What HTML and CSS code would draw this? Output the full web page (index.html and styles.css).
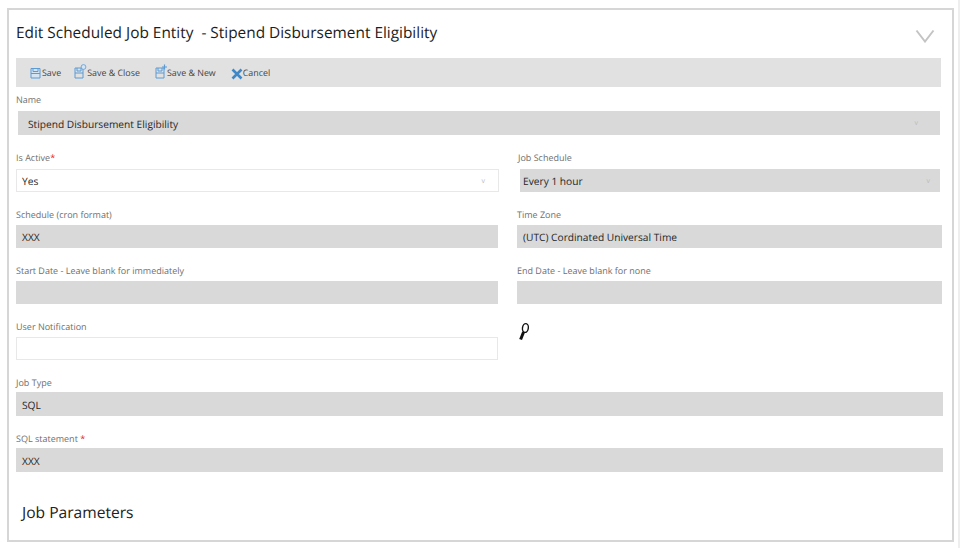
FILE: index.html
```html
<!DOCTYPE html>
<html lang="en">
<head>
<meta charset="utf-8">
<title>Edit Scheduled Job Entity</title>
<link rel="stylesheet" href="styles.css">
</head>
<body>
<main class="frame">
  <header class="head">
    <h1 class="title">Edit Scheduled Job Entity&nbsp; - Stipend Disbursement Eligibility</h1>
    <svg class="collapse" width="20" height="14" viewBox="0 0 20 14"><path d="M1.5 1.5 L10 12.5 L18.5 1.5" fill="none" stroke="#c4c4c4" stroke-width="2"/></svg>
  </header>
  <nav class="toolbar">
    <span class="tool tool-save">
      <svg width="11" height="12" viewBox="0 0 11 12"><path d="M1 1.5h9v9.5H1z" fill="#d4e4f3" stroke="#5b9bd5" stroke-width="1"/><path d="M3 1.5v3h5v-3 M1 6.5h9" fill="none" stroke="#5b9bd5" stroke-width="1"/></svg>Save</span>
    <span class="tool tool-close">
      <svg width="13" height="15" viewBox="0 0 13 15"><path d="M1 4h8v10H1z M3 4v3h4V4 M1 9h8" fill="none" stroke="#5b9bd5" stroke-width="1"/><circle cx="9.5" cy="3" r="2.4" fill="#d4e4f3" stroke="#5b9bd5" stroke-width=".8"/></svg>Save &amp; Close</span>
    <span class="tool tool-new">
      <svg width="13" height="15" viewBox="0 0 13 15"><path d="M1 4h8v10H1z M3 4v3h4V4 M1 9h8" fill="none" stroke="#5b9bd5" stroke-width="1"/><path d="M9.5 .5v5 M7 3h5" stroke="#5b9bd5" stroke-width="1.2"/></svg>Save &amp; New</span>
    <span class="tool tool-cancel">
      <svg width="12" height="12" viewBox="0 0 12 12"><path d="M1.5 1.5 L10.5 10.5 M10.5 1.5 L1.5 10.5" stroke="#3f87c7" stroke-width="2.6"/></svg>Cancel</span>
  </nav>

  <div class="field name-field">
    <label class="label">Name</label>
    <div class="box grey inset">Stipend Disbursement Eligibility<span class="caret">v</span></div>
  </div>

  <div class="row row-first">
    <div class="field narrow">
      <label class="label">Is Active<span class="req">*</span></label>
      <div class="box white select">Yes<span class="caret">v</span></div>
    </div>
    <div class="field schedule">
      <label class="label">Job Schedule</label>
      <div class="box grey select">Every 1 hour<span class="caret">v</span></div>
    </div>
  </div>

  <div class="row">
    <div class="field">
      <label class="label">Schedule (cron format)</label>
      <div class="box grey">XXX</div>
    </div>
    <div class="field">
      <label class="label">Time Zone</label>
      <div class="box grey">(UTC) Cordinated Universal Time</div>
    </div>
  </div>

  <div class="row">
    <div class="field">
      <label class="label">Start Date - Leave blank for immediately</label>
      <div class="box grey"></div>
    </div>
    <div class="field">
      <label class="label">End Date - Leave blank for none</label>
      <div class="box grey"></div>
    </div>
  </div>

  <div class="row">
    <div class="field">
      <label class="label">User Notification</label>
      <div class="box white"></div>
    </div>
    <div class="field cursor-cell">
      <svg width="12" height="20" viewBox="0 0 12 20"><ellipse cx="7.4" cy="6" rx="2.9" ry="4.4" transform="rotate(10 7.4 6)" fill="#fff" stroke="#111" stroke-width="1.4"/><path d="M5.6 10 L2.6 17.5" stroke="#111" stroke-width="3"/></svg>
    </div>
  </div>

  <div class="field full">
    <label class="label">Job Type</label>
    <div class="box grey">SQL</div>
  </div>

  <div class="field full">
    <label class="label">SQL statement <span class="req">*</span></label>
    <div class="box grey">XXX</div>
  </div>

  <h2 class="section">Job Parameters</h2>
</main>
</body>
</html>
```
FILE: styles.css
```css
* { box-sizing: border-box; }
html, body { height: 100%; }
body {
  margin: 0;
  padding: 8px 5px 6px 7px;
  background: #fff;
  color: #2b2b2b;
  font-family: "Open Sans", "Liberation Sans", sans-serif;
  text-rendering: geometricPrecision;
  overflow: hidden;
  border-right: 2px solid #eeeeee;
}
.frame {
  width: 947px;
  height: 534px;
  border: 2px solid #d6d6d6;
  padding: 0 9px 0 7px;
}
.head {
  height: 48px;
  display: flex;
  align-items: center;
  justify-content: space-between;
  padding: 0 8px 0 0;
}
.title {
  margin: 0 0 3px;
  font-size: 15.4px;
  font-weight: 400;
  color: #1d1d1d;
}
.collapse { margin-top: 4px; }
.toolbar {
  height: 29px;
  width: 925px;
  background: #e1e1e1;
  display: flex;
  align-items: center;
  padding-left: 14px;
  font-size: 8.9px;
  color: #444;
}
.tool { display: flex; align-items: center; }
.tool svg { flex: none; }
.tool-save svg { margin-right: 1px; }
.tool-close { margin-left: 13px; }
.tool-new { margin-left: 15px; }
.tool-new svg { margin-right: -1px; }
.tool-cancel { margin-left: 15px; }
.tool-cancel svg { margin-top: 2px; }
.tool-close svg, .tool-new svg { margin-top: -3px; }
.field { display: flex; flex-direction: column; }
.label {
  display: block;
  height: 24px;
  padding-top: 6px;
  font-size: 9px;
  line-height: 14px;
  color: #6f6f6f;
}
.req { color: #d22; }
.box {
  height: 24px;
  display: flex;
  align-items: center;
  justify-content: space-between;
  padding: 1px 6px 0;
  font-size: 10.2px;
  color: #262626;
}
.grey { background: #d9d9d9; }
.white { background: #fff; border: 1px solid #e8e8e8; }
.inset { margin-left: 2px; width: 922px; padding-left: 10px; }
.inset .caret { padding-right: 16px; }
.select { padding-left: 5px; padding-right: 3px; }
.caret { color: #bcbcbc; font-size: 7px; padding-right: 10px; }
.row {
  display: grid;
  grid-template-columns: 482px 425px;
  column-gap: 19px;
  margin-top: 8px;
  width: 926px;
}
.row .label { padding-top: 8px; height: 25px; }
.row .box { height: 23px; }
.row-first { margin-top: 10px; grid-template-columns: 483px 420px; column-gap: 21px; }
.row-first .label { padding-top: 6px; height: 24px; }
.row-first .schedule .label { margin-left: -2px; }
.row-first .schedule .caret { padding-right: 7px; }
.schedule .box { padding-left: 3px; }
.cursor-cell { padding: 10px 0 0 1px; }
.full { width: 927px; margin-top: 8px; }
.full .label { padding-top: 8px; }
.section {
  margin: 29px 0 0 6px;
  font-size: 15.6px;
  font-weight: 400;
  color: #222;
}
```
